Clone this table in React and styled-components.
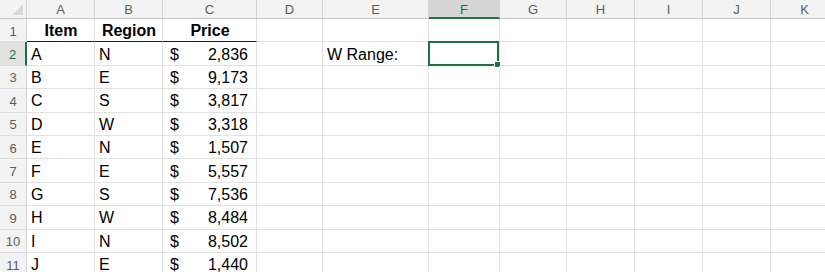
import styled, { createGlobalStyle } from 'styled-components';

const Global = createGlobalStyle`
    html, body {
        margin: 0;
        padding: 0;
        background: #ffffff;
        overflow: hidden;
    }
`

const green = '#1e7145';

const columns = [
    { name: 'A', width: 68 },
    { name: 'B', width: 68 },
    { name: 'C', width: 94 },
    { name: 'D', width: 66 },
    { name: 'E', width: 106 },
    { name: 'F', width: 71 },
    { name: 'G', width: 67 },
    { name: 'H', width: 68 },
    { name: 'I', width: 68 },
    { name: 'J', width: 68 },
    { name: 'K', width: 68 },
]

const dados = [
    ['A', 'N', '2,836'],
    ['B', 'E', '9,173'],
    ['C', 'S', '3,817'],
    ['D', 'W', '3,318'],
    ['E', 'N', '1,507'],
    ['F', 'E', '5,557'],
    ['G', 'S', '7,536'],
    ['H', 'W', '8,484'],
    ['I', 'N', '8,502'],
    ['J', 'E', '1,440'],
]

const Planilha = styled.div`
    display: grid;
    grid-template-columns: 27px ${columns.map(c => c.width + 'px').join(' ')};
    grid-template-rows: 19px repeat(11, 23.4px);
    font-family: "Liberation Sans", Arial, sans-serif;
    color: #000;
`

const Canto = styled.div`
    position: relative;
    background: #f3f3f3;
    border-right: 1px solid #d4d4d4;
    border-bottom: 1px solid #c6c6c6;
    box-sizing: border-box;

    &::after {
        content: '';
        position: absolute;
        right: 3px;
        bottom: 3px;
        border-left: 11px solid transparent;
        border-bottom: 11px solid #d9d9d9;
    }
`

const CabecalhoColuna = styled.div`
    display: flex;
    align-items: center;
    justify-content: center;
    box-sizing: border-box;
    background: ${p => p.$ativo ? '#d6d6d6' : '#f3f3f3'};
    border-right: 1px solid #d4d4d4;
    border-bottom: ${p => p.$ativo ? `2px solid ${green}` : '1px solid #c6c6c6'};
    color: ${p => p.$ativo ? green : '#5c5c5c'};
    font-size: 13px;
    padding-top: 1px;
`

const CabecalhoLinha = styled.div`
    display: flex;
    align-items: center;
    justify-content: center;
    box-sizing: border-box;
    background: ${p => p.$ativo ? '#e2e2e2' : '#f3f3f3'};
    border-bottom: 1px solid #dcdcdc;
    border-right: ${p => p.$ativo ? `2px solid ${green}` : '1px solid #d4d4d4'};
    color: ${p => p.$ativo ? green : '#5c5c5c'};
    font-size: 13px;
    padding-top: 2px;
`

const Celula = styled.div`
    position: relative;
    display: flex;
    align-items: center;
    justify-content: ${p => p.$centro ? 'center' : 'flex-start'};
    box-sizing: border-box;
    padding: 2px 3px 0 4px;
    border-right: 1px solid #e1e1e1;
    border-bottom: ${p => p.$titulo ? '1px solid #1a1a1a' : '1px solid #e1e1e1'};
    font-size: 16px;
    font-weight: ${p => p.$titulo ? 700 : 400};
    white-space: nowrap;
`

const Moeda = styled(Celula)`
    justify-content: space-between;
    padding: 2px 8px 0 7px;
`

const Selecao = styled.div`
    position: absolute;
    inset: -1px 0 -1px -1px;
    border: 2px solid ${green};

    &::after {
        content: '';
        position: absolute;
        right: -4px;
        bottom: -4px;
        width: 5px;
        height: 5px;
        background: ${green};
        border: 1px solid #fff;
    }
`

function linha(numero) {
    const item = dados[numero - 2];
    const extras = columns.slice(3).map(c => {
        const chave = c.name + numero;
        if (numero === 2 && c.name === 'E') return <Celula key={chave}>W Range:</Celula>;
        if (numero === 2 && c.name === 'F') return <Celula key={chave}><Selecao /></Celula>;
        return <Celula key={chave} />;
    });

    return [
        <CabecalhoLinha key={'r' + numero} $ativo={numero === 2}>{numero}</CabecalhoLinha>,
        <Celula key={'A' + numero}>{item[0]}</Celula>,
        <Celula key={'B' + numero}>{item[1]}</Celula>,
        <Moeda key={'C' + numero}><span>$</span><span>{item[2]}</span></Moeda>,
        ...extras,
    ];
}

function App() {
    return (
        <>
            <Global />
            <Planilha>
                <Canto />
                {columns.map(c => (
                    <CabecalhoColuna key={c.name} $ativo={c.name === 'F'}>{c.name}</CabecalhoColuna>
                ))}

                <CabecalhoLinha>1</CabecalhoLinha>
                <Celula $titulo $centro>Item</Celula>
                <Celula $titulo $centro>Region</Celula>
                <Celula $titulo $centro>Price</Celula>
                {columns.slice(3).map(c => <Celula key={c.name + 1} />)}

                {dados.map((_, i) => linha(i + 2))}
            </Planilha>
        </>
    )
}

export default App;
